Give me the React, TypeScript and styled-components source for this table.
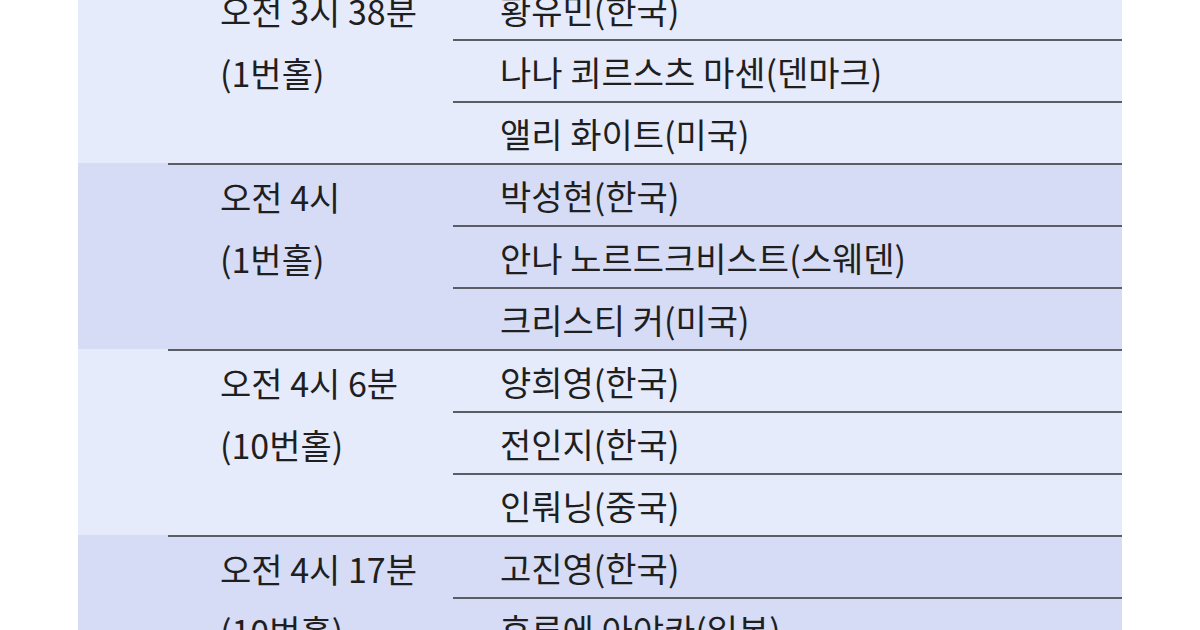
import * as React from "react";
import styled, { createGlobalStyle } from "styled-components";

const GlobalStyle = createGlobalStyle`
  html, body {
    margin: 0;
    padding: 0;
    background: #ffffff;
    overflow: hidden;
  }
  body {
    font-family: "Noto Sans CJK KR", "Noto Sans", sans-serif;
  }
`;

type Group = {
  time: string[];
  names: string[];
};

const groups: Group[] = [
  {
    time: ["오전 3시 38분", "(1번홀)"],
    names: ["황유민(한국)", "나나 쾨르스츠 마센(덴마크)", "앨리 화이트(미국)"],
  },
  {
    time: ["오전 4시", "(1번홀)"],
    names: ["박성현(한국)", "안나 노르드크비스트(스웨덴)", "크리스티 커(미국)"],
  },
  {
    time: ["오전 4시 6분", "(10번홀)"],
    names: ["양희영(한국)", "전인지(한국)", "인뤄닝(중국)"],
  },
  {
    time: ["오전 4시 17분", "(10번홀)"],
    names: ["고진영(한국)", "후루에 아야카(일본)", "메간 캉(미국)"],
  },
];

export default function App() {
  return (
    <>
      <GlobalStyle />
      <Table>
        {groups.map((g, i) => (
          <GroupRow key={i} $dark={i % 2 === 1}>
            <Spacer />
            <GroupBody $first={i === 0}>
              <TimeCell>
                {g.time.map((t, j) => (
                  <TimeLine key={j}>{t}</TimeLine>
                ))}
              </TimeCell>
              <NameList>
                {g.names.map((n, j) => (
                  <NameRow key={j}>{n}</NameRow>
                ))}
              </NameList>
            </GroupBody>
          </GroupRow>
        ))}
      </Table>
    </>
  );
}

const Table = styled.div`
  width: 1044px;
  margin: -23px 0 0 78px;
  display: flex;
  flex-direction: column;
`;

const GroupRow = styled.div<{ $dark: boolean }>`
  display: flex;
  background: ${(p) => (p.$dark ? "#d6dcf5" : "#e6ebfb")};
`;

const Spacer = styled.div`
  width: 90px;
  flex: none;
`;

const GroupBody = styled.div<{ $first: boolean }>`
  flex: 1;
  display: flex;
  border-top: 2px solid ${(p) => (p.$first ? "transparent" : "#5a5d64")};
`;

const TimeCell = styled.div`
  width: 285px;
  flex: none;
  padding-left: 52px;
  box-sizing: border-box;
  display: flex;
  flex-direction: column;
`;

const TimeLine = styled.div`
  height: 62px;
  display: flex;
  align-items: center;
  font-size: 34px;
  color: #1f1f1f;
  white-space: nowrap;
`;

const NameList = styled.div`
  flex: 1;
  display: flex;
  flex-direction: column;
`;

const NameRow = styled.div`
  height: 60px;
  padding-left: 47px;
  display: flex;
  align-items: center;
  font-size: 34px;
  color: #1f1f1f;
  white-space: nowrap;

  & + & {
    border-top: 2px solid #5a5d64;
  }
`;
